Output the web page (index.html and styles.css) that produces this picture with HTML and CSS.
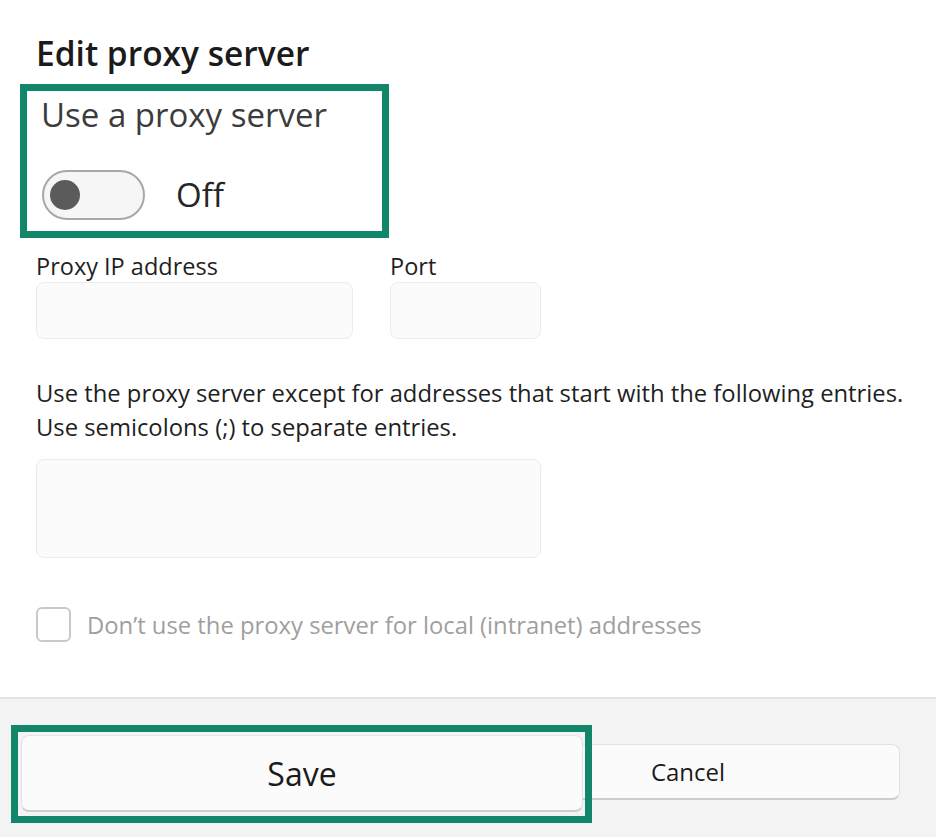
FILE: index.html
```html
<!DOCTYPE html>
<html lang="en">
<head>
<meta charset="utf-8">
<title>Edit proxy server</title>
<link rel="stylesheet" href="styles.css">
</head>
<body>
<div class="dialog">
  <main class="content">
    <h1 class="title">Edit proxy server</h1>
    <section class="proxy-box">
      <div class="box-title">Use a proxy server</div>
      <div class="toggle-row">
        <span class="toggle"><span class="knob"></span></span>
        <span class="toggle-label">Off</span>
      </div>
    </section>
    <div class="fields">
      <div class="field">
        <div class="label">Proxy IP address</div>
        <div class="input ip"></div>
      </div>
      <div class="field">
        <div class="label">Port</div>
        <div class="input port"></div>
      </div>
    </div>
    <p class="desc">Use the proxy server except for addresses that start with the following entries.<br>Use semicolons (;) to separate entries.</p>
    <div class="input area"></div>
    <div class="check-row">
      <span class="checkbox"></span>
      <span class="check-label">Don’t use the proxy server for local (intranet) addresses</span>
    </div>
  </main>
  <footer class="footer">
    <div class="save-wrap">
      <button class="btn save">Save</button>
    </div>
    <button class="btn cancel">Cancel</button>
  </footer>
</div>
</body>
</html>
```
FILE: styles.css
```css
html, body {
  margin: 0;
  padding: 0;
  background: #ffffff;
}
body {
  font-family: "Open Sans", "Noto Sans", sans-serif;
  color: #1b1b1b;
  width: 936px;
  height: 837px;
  overflow: hidden;
}
.dialog {
  display: flex;
  flex-direction: column;
  height: 837px;
}
.content {
  padding: 0 0 0 36px;
  height: 697px;
  box-sizing: border-box;
}
.title {
  margin: 0;
  padding-top: 32px;
  font-size: 33.5px;
  line-height: 42px;
  font-weight: 600;
  color: #1b1b1b;
}
.proxy-box {
  margin: 10px 0 0 -16px;
  width: 369px;
  height: 154px;
  box-sizing: border-box;
  border: 7px solid #12866a;
  padding: 4px 0 0 14px;
}
.box-title {
  font-size: 33px;
  line-height: 40px;
  color: #3c3c3c;
}
.toggle-row {
  display: flex;
  align-items: center;
  gap: 31px;
  margin-top: 35px;
  padding-left: 1px;
}
.toggle {
  width: 103px;
  height: 50px;
  box-sizing: border-box;
  border: 2px solid #a8a8a8;
  border-radius: 25px;
  background: #f6f6f6;
  display: flex;
  align-items: center;
  padding-left: 6px;
}
.knob {
  width: 30px;
  height: 30px;
  border-radius: 50%;
  background: #5b5b5b;
}
.toggle-label {
  font-size: 33px;
  line-height: 40px;
  color: #262626;
}
.fields {
  display: flex;
  gap: 37px;
  margin-top: 13px;
}
.label {
  font-size: 23.5px;
  line-height: 31px;
  color: #1f1f1f;
}
.input {
  box-sizing: border-box;
  background: #fbfbfb;
  border: 1px solid #ececec;
  border-radius: 8px;
  height: 57px;
}
.ip { width: 317px; }
.port { width: 151px; }
.desc {
  margin: 37px 0 0 0;
  font-size: 23.8px;
  line-height: 34px;
  color: #1f1f1f;
}
.area {
  width: 505px;
  height: 99px;
  margin-top: 15px;
}
.check-row {
  display: flex;
  align-items: center;
  gap: 16px;
  margin-top: 49px;
}
.checkbox {
  width: 35px;
  height: 35px;
  box-sizing: border-box;
  border: 2px solid #c9c9c9;
  border-radius: 6px;
  background: #ffffff;
}
.check-label {
  font-size: 23.8px;
  color: #9f9f9f;
}
.footer {
  flex: 1;
  background: #f3f3f3;
  border-top: 2px solid #e4e4e4;
  display: flex;
  align-items: center;
  padding: 0 0 0 11px;
}
.save-wrap {
  position: relative;
  z-index: 1;
  border: 7px solid #12866a;
  padding: 3px 2px 4px 3px;
  margin-top: 12px;
}
.btn {
  font-family: inherit;
  background: #fbfbfb;
  border: 1px solid #e2e2e2;
  border-bottom: 2px solid #cdcdcd;
  border-radius: 8px;
  color: #1b1b1b;
  box-sizing: border-box;
  display: block;
  padding: 0;
}
.save {
  width: 562px;
  height: 77px;
  font-size: 32px;
}
.cancel {
  width: 424px;
  height: 56px;
  font-size: 24px;
  margin-left: -116px;
  margin-top: 7px;
}
```
